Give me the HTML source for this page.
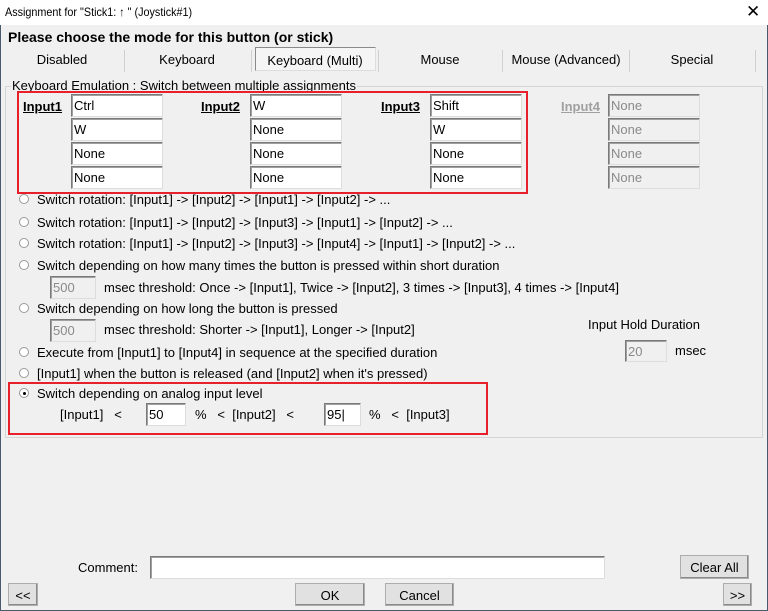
<!DOCTYPE html>
<html><head><meta charset="utf-8"><style>
*{margin:0;padding:0;box-sizing:border-box}
body{width:768px;height:611px;background:#f0f0f0;font-family:"Liberation Sans",sans-serif;font-size:13px;color:#000;position:relative;overflow:hidden}
.a{position:absolute;white-space:nowrap}
.t{position:absolute;white-space:nowrap;line-height:15px;font-size:13px}
.in{position:absolute;background:#fff;border:1px solid #7a7a7a;border-right-color:#ddd;border-bottom-color:#ddd;box-shadow:inset 1px 1px 0 #a0a0a0}
.in span{position:absolute;left:2px;top:3px;line-height:15px}
.dis span{color:#8a8a8a}
.btn{position:absolute;background:#e1e1e1;border:1px solid #adadad;box-shadow:inset -1px -1px 0 #8a8a8a}
.btn span{position:absolute;left:0;right:0;top:4px;text-align:center;line-height:15px}
.rad{position:absolute;width:10px;height:10px;border-radius:50%;border:1px solid #9a9a9a;background:#fff}
.sep{position:absolute;top:50px;width:1px;height:22px;background:#d0d0d0}
.tab{position:absolute;top:52px;width:120px;text-align:center;line-height:15px}
.red{position:absolute;border:2px solid #e8202a}
</style></head><body>
<div class="a" style="left:0;top:0;width:768px;height:25px;background:#fff"></div>
<div class="a" style="left:5px;top:5px;font-size:12px;line-height:14px;transform:scaleX(.9);transform-origin:0 50%">Assignment for "Stick1: ↑ " (Joystick#1)</div>
<div class="a" style="left:746px;top:2px;font-size:17px;line-height:20px">✕</div>
<div class="a" style="left:0;top:25px;width:1px;height:586px;background:#4a5a6a"></div>
<div class="a" style="right:0;top:25px;width:1px;height:586px;background:#4a5a6a"></div>
<div class="a" style="left:0;bottom:0;width:768px;height:1px;background:#4a5a6a"></div>
<div class="a" style="left:8px;top:29px;font-size:14px;line-height:17px;font-weight:bold">Please choose the mode for this button (or stick)</div>
<div class="tab" style="left:2px">Disabled</div>
<div class="sep" style="left:124px"></div>
<div class="tab" style="left:127px">Keyboard</div>
<div class="sep" style="left:251px"></div>
<div class="a" style="left:255px;top:47px;width:121px;height:24px;background:#f5f5f5;border:1px solid #8a8a8a;border-right-color:#ddd;border-bottom-color:#ddd"></div>
<div class="tab" style="left:255px;top:53px">Keyboard (Multi)</div>
<div class="sep" style="left:378px"></div>
<div class="tab" style="left:380px">Mouse</div>
<div class="sep" style="left:502px"></div>
<div class="tab" style="left:506px">Mouse (Advanced)</div>
<div class="sep" style="left:629px"></div>
<div class="tab" style="left:632px">Special</div>
<div class="sep" style="left:755px"></div>
<div class="a" style="left:5px;top:86px;width:758px;height:352px;border:1px solid #d5d5d5"></div>
<div class="t" style="left:11px;top:78px;background:#f0f0f0;padding:0 1px">Keyboard Emulation : Switch between multiple assignments</div>
<div class="t" style="left:23px;top:99px;font-weight:bold;text-decoration:underline">Input1</div>
<div class="t" style="left:201px;top:99px;font-weight:bold;text-decoration:underline">Input2</div>
<div class="t" style="left:381px;top:99px;font-weight:bold;text-decoration:underline">Input3</div>
<div class="t" style="left:561px;top:99px;font-weight:bold;text-decoration:underline;color:#a0a0a0">Input4</div>
<div class="in" style="left:71px;top:94px;width:92px;height:23px"><span>Ctrl</span></div>
<div class="in" style="left:71px;top:118px;width:92px;height:23px"><span>W</span></div>
<div class="in" style="left:71px;top:142px;width:92px;height:23px"><span>None</span></div>
<div class="in" style="left:71px;top:166px;width:92px;height:23px"><span>None</span></div>
<div class="in" style="left:250px;top:94px;width:92px;height:23px"><span>W</span></div>
<div class="in" style="left:250px;top:118px;width:92px;height:23px"><span>None</span></div>
<div class="in" style="left:250px;top:142px;width:92px;height:23px"><span>None</span></div>
<div class="in" style="left:250px;top:166px;width:92px;height:23px"><span>None</span></div>
<div class="in" style="left:430px;top:94px;width:92px;height:23px"><span>Shift</span></div>
<div class="in" style="left:430px;top:118px;width:92px;height:23px"><span>W</span></div>
<div class="in" style="left:430px;top:142px;width:92px;height:23px"><span>None</span></div>
<div class="in" style="left:430px;top:166px;width:92px;height:23px"><span>None</span></div>
<div class="in dis" style="left:608px;top:94px;width:92px;height:23px;background:#f0f0f0"><span>None</span></div>
<div class="in dis" style="left:608px;top:118px;width:92px;height:23px;background:#f0f0f0"><span>None</span></div>
<div class="in dis" style="left:608px;top:142px;width:92px;height:23px;background:#f0f0f0"><span>None</span></div>
<div class="in dis" style="left:608px;top:166px;width:92px;height:23px;background:#f0f0f0"><span>None</span></div>
<div class="red" style="left:17px;top:91px;width:511px;height:103px"></div>

<div class="rad" style="left:19px;top:194px"></div><div class="t" style="left:37px;top:192px">Switch rotation: [Input1] -&gt; [Input2] -&gt; [Input1] -&gt; [Input2] -&gt; ...</div>
<div class="rad" style="left:19px;top:217px"></div><div class="t" style="left:37px;top:215px">Switch rotation: [Input1] -&gt; [Input2] -&gt; [Input3] -&gt; [Input1] -&gt; [Input2] -&gt; ...</div>
<div class="rad" style="left:19px;top:238px"></div><div class="t" style="left:37px;top:236px">Switch rotation: [Input1] -&gt; [Input2] -&gt; [Input3] -&gt; [Input4] -&gt; [Input1] -&gt; [Input2] -&gt; ...</div>
<div class="rad" style="left:19px;top:260px"></div><div class="t" style="left:37px;top:258px">Switch depending on how many times the button is pressed within short duration</div>
<div class="in dis" style="left:50px;top:276px;width:46px;height:23px;background:#f0f0f0"><span>500</span></div>
<div class="t" style="left:104px;top:280px">msec threshold: Once -&gt; [Input1], Twice -&gt; [Input2], 3 times -&gt; [Input3], 4 times -&gt; [Input4]</div>
<div class="rad" style="left:19px;top:303px"></div><div class="t" style="left:37px;top:301px">Switch depending on how long the button is pressed</div>
<div class="in dis" style="left:50px;top:319px;width:46px;height:23px;background:#f0f0f0"><span>500</span></div>
<div class="t" style="left:104px;top:322px">msec threshold: Shorter -&gt; [Input1], Longer -&gt; [Input2]</div>
<div class="t" style="left:588px;top:317px">Input Hold Duration</div>
<div class="in dis" style="left:625px;top:340px;width:42px;height:22px;background:#f0f0f0"><span>20</span></div>
<div class="t" style="left:675px;top:343px">msec</div>
<div class="rad" style="left:19px;top:347px"></div><div class="t" style="left:37px;top:345px">Execute from [Input1] to [Input4] in sequence at the specified duration</div>
<div class="rad" style="left:19px;top:368px"></div><div class="t" style="left:37px;top:366px">[Input1] when the button is released (and [Input2] when it's pressed)</div>
<div class="rad" style="left:19px;top:388px"><div style="position:absolute;left:3px;top:3px;width:3px;height:3px;border-radius:50%;background:#000"></div></div>
<div class="t" style="left:37px;top:386px">Switch depending on analog input level</div>
<div class="t" style="left:60px;top:407px">[Input1]&nbsp;&nbsp; &lt;</div>
<div class="in" style="left:146px;top:403px;width:40px;height:23px"><span>50</span></div>
<div class="t" style="left:195px;top:407px">%&nbsp;&nbsp;&nbsp;&lt;&nbsp; [Input2]&nbsp;&nbsp; &lt;</div>
<div class="in" style="left:324px;top:403px;width:37px;height:23px"><span>95|</span></div>
<div class="t" style="left:369px;top:407px">%&nbsp;&nbsp;&nbsp;&lt;&nbsp; [Input3]</div>
<div class="red" style="left:8px;top:382px;width:480px;height:53px"></div>

<div class="t" style="left:78px;top:560px">Comment:</div>
<div class="in" style="left:150px;top:556px;width:455px;height:23px"></div>
<div class="btn" style="left:680px;top:555px;width:69px;height:24px"><span>Clear All</span></div>
<div class="btn" style="left:8px;top:583px;width:30px;height:23px"><span>&lt;&lt;</span></div>
<div class="btn" style="left:295px;top:583px;width:70px;height:23px"><span>OK</span></div>
<div class="btn" style="left:385px;top:583px;width:69px;height:23px"><span>Cancel</span></div>
<div class="btn" style="left:723px;top:583px;width:29px;height:23px"><span>&gt;&gt;</span></div>
</body></html>
